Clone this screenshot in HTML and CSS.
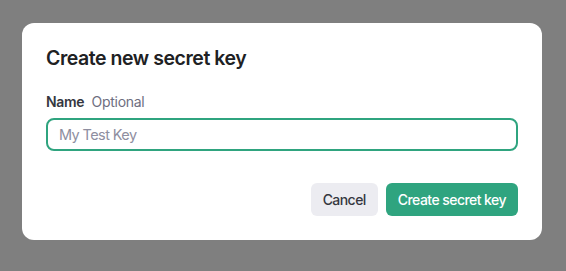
FILE: index.html
```html
<!DOCTYPE html>
<html lang="en">
<head>
    <meta charset="UTF-8">
    <meta name="viewport" content="width=device-width, initial-scale=1.0">
    <title>Create new secret key</title>
    <link rel="stylesheet" href="styles.css">
</head>
<body>
    <div class="overlay">
        <div class="modal">
            <h2 class="modal-title">Create new secret key</h2>
            <form class="key-form">
                <label class="field-label" for="key-name">Name <span class="field-hint">Optional</span></label>
                <input type="text" id="key-name" placeholder="My Test Key">
                <div class="actions">
                    <button type="button" class="btn btn-neutral">Cancel</button>
                    <button type="submit" class="btn btn-primary">Create secret key</button>
                </div>
            </form>
        </div>
    </div>
</body>
</html>
```

FILE: styles.css
```css
* {
    margin: 0;
    padding: 0;
    box-sizing: border-box;
}

body {
    min-height: 100vh;
    background: #7f7f7f;
    font-family: Inter, "Noto Sans", sans-serif;
    color: #202123;
}

.overlay {
    padding: 23px 24px 0 22px;
}

.modal {
    width: 520px;
    background: #fff;
    border-radius: 12px;
    padding: 21px 24px 24px;
}

.modal-title {
    font-size: 19.5px;
    line-height: 28px;
    font-weight: 600;
    letter-spacing: -0.45px;
    margin-bottom: 20px;
}

.key-form {
    display: flex;
    flex-direction: column;
}

.field-label {
    font-size: 14px;
    line-height: 20px;
    font-weight: 600;
    letter-spacing: -0.3px;
    color: #353740;
    margin-bottom: 6px;
}

.field-hint {
    font-weight: 400;
    color: #6e6e80;
    margin-left: 4px;
}

input {
    height: 33px;
    width: 100%;
    padding: 0 11px;
    font-family: inherit;
    font-size: 14.5px;
    letter-spacing: -0.6px;
    color: #353740;
    border: 2px solid #2fa47f;
    border-radius: 8px;
    outline: none;
}

input::placeholder {
    color: #8e8ea0;
}

.actions {
    display: flex;
    justify-content: flex-end;
    gap: 8px;
    margin-top: 32px;
}

.btn {
    height: 33px;
    padding: 0 12px;
    border: none;
    border-radius: 6px;
    font-family: inherit;
    font-size: 14px;
    font-weight: 500;
    letter-spacing: -0.55px;
    cursor: pointer;
}

.btn-neutral {
    background: #ececf1;
    color: #353740;
}

.btn-primary {
    background: #2fa47f;
    color: #fff;
}
```
